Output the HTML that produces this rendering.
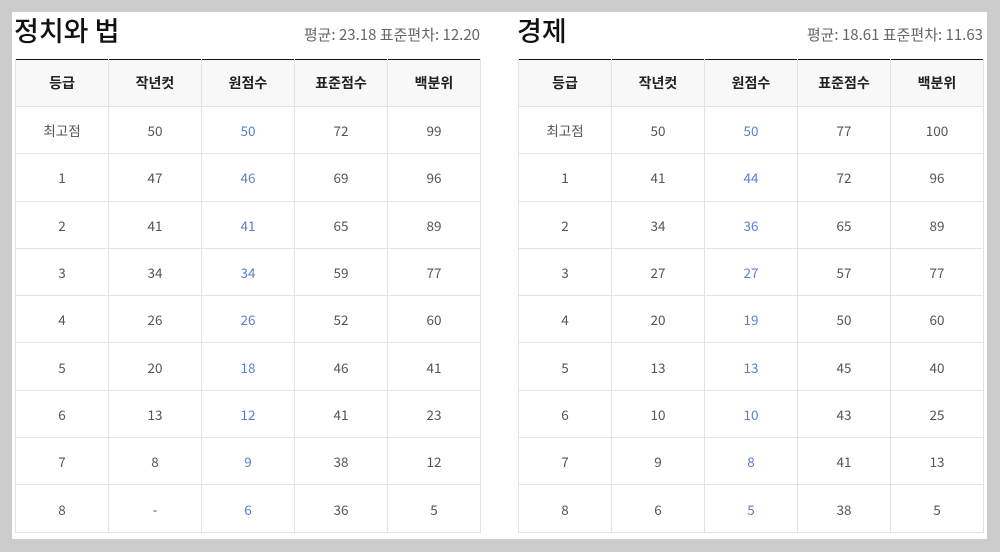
<!DOCTYPE html><html><head><meta charset="utf-8"><style>
body{margin:0;width:1000px;height:552px;background:#cccccc;font-family:"Liberation Sans","Noto Sans CJK KR",sans-serif;position:relative;overflow:hidden}
.panel{position:absolute;left:12px;top:12px;width:975px;height:527px;background:#fff}
.sec{position:absolute;top:0;width:465px}
h2{position:absolute;left:-1px;top:0;margin:0;font-size:27px;font-weight:500;color:#111;line-height:36px;font-family:"Noto Sans CJK KR",sans-serif}
.st{position:absolute;right:0;top:13px;font-size:15px;color:#666;font-family:"Noto Sans CJK KR",sans-serif;line-height:20px}
table{position:absolute;top:47px;left:0;width:466px;border-collapse:collapse;table-layout:fixed;border-top:1px solid #111}
td,th{border:1px solid #e3e3e3;text-align:center;font-size:13.5px;color:#555;height:46.3px;padding:0;font-family:"Noto Sans CJK KR",sans-serif}
th{background:#f8f8f8;font-weight:700;color:#222;font-size:14px;height:46px}
tr:first-child th{border-top:none}
.b{color:#5b7fd0}
</style></head><body><div class="panel">
<div class="sec" style="left:3px"><h2>정치와 법</h2><div class="st">평균: 23.18 표준편차: 12.20</div>
<table><tr><th>등급</th><th>작년컷</th><th>원점수</th><th>표준점수</th><th>백분위</th></tr>
<tr><td>최고점</td><td>50</td><td class="b">50</td><td>72</td><td>99</td></tr>
<tr><td>1</td><td>47</td><td class="b">46</td><td>69</td><td>96</td></tr>
<tr><td>2</td><td>41</td><td class="b">41</td><td>65</td><td>89</td></tr>
<tr><td>3</td><td>34</td><td class="b">34</td><td>59</td><td>77</td></tr>
<tr><td>4</td><td>26</td><td class="b">26</td><td>52</td><td>60</td></tr>
<tr><td>5</td><td>20</td><td class="b">18</td><td>46</td><td>41</td></tr>
<tr><td>6</td><td>13</td><td class="b">12</td><td>41</td><td>23</td></tr>
<tr><td>7</td><td>8</td><td class="b">9</td><td>38</td><td>12</td></tr>
<tr><td>8</td><td>-</td><td class="b">6</td><td>36</td><td>5</td></tr></table></div>
<div class="sec" style="left:506px"><h2>경제</h2><div class="st">평균: 18.61 표준편차: 11.63</div>
<table><tr><th>등급</th><th>작년컷</th><th>원점수</th><th>표준점수</th><th>백분위</th></tr>
<tr><td>최고점</td><td>50</td><td class="b">50</td><td>77</td><td>100</td></tr>
<tr><td>1</td><td>41</td><td class="b">44</td><td>72</td><td>96</td></tr>
<tr><td>2</td><td>34</td><td class="b">36</td><td>65</td><td>89</td></tr>
<tr><td>3</td><td>27</td><td class="b">27</td><td>57</td><td>77</td></tr>
<tr><td>4</td><td>20</td><td class="b">19</td><td>50</td><td>60</td></tr>
<tr><td>5</td><td>13</td><td class="b">13</td><td>45</td><td>40</td></tr>
<tr><td>6</td><td>10</td><td class="b">10</td><td>43</td><td>25</td></tr>
<tr><td>7</td><td>9</td><td class="b">8</td><td>41</td><td>13</td></tr>
<tr><td>8</td><td>6</td><td class="b">5</td><td>38</td><td>5</td></tr></table></div>
</div></body></html>
